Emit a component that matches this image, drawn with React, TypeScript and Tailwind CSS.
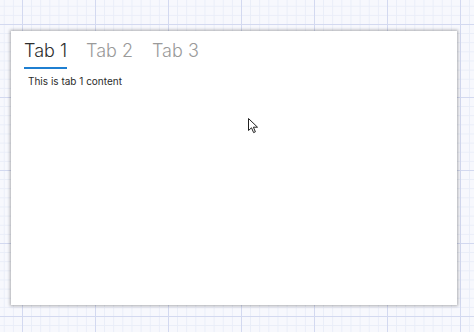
import React, { useState } from 'react'

const tabs = ['Tab 1', 'Tab 2', 'Tab 3']

export default function App() {
  const [active, setActive] = useState(0)

  return (
    <div
      className="relative h-[332px] w-full overflow-hidden bg-[#f7f8fd] bg-[image:linear-gradient(to_right,#d3d9f0_1px,transparent_1px),linear-gradient(to_bottom,#d3d9f0_1px,transparent_1px),linear-gradient(to_right,#e9edf8_1px,transparent_1px),linear-gradient(to_bottom,#e9edf8_1px,transparent_1px)] bg-[size:73px_73px,73px_73px,9.125px_9.125px,9.125px_9.125px] bg-[position:22px_24px,22px_24px,22px_24px,22px_24px] pl-[11px] pt-[31px] font-[Inter,sans-serif]"
    >
      {/* card */}
      <div className="h-[274px] w-[446px] bg-white shadow-[0_0_3px_1px_rgba(0,0,0,0.3)]">
        <div className="flex gap-[19px] pl-[13px] pt-[8px]">
          {tabs.map((t, i) => (
            <button
              key={t}
              onClick={() => setActive(i)}
              className={`border-b-2 pb-1 text-[18px] font-light leading-6 ${
                i === active ? 'border-[#1f7fd1] text-[#2e2e2e]' : 'border-transparent text-[#9a9a9a]'
              }`}
            >
              {t}
            </button>
          ))}
        </div>
        <p className="mt-[4px] pl-[17px] text-[10px] leading-4 text-[#2b2b2b]">
          This is tab {active + 1} content
        </p>
      </div>

      {/* mouse pointer */}
      <svg className="absolute left-[248px] top-[118px]" width="11" height="16" viewBox="0 0 11 16">
        <path d="M0.5 0.5 L0.5 12.5 L3.5 9.8 L5.6 14.6 L7.4 13.8 L5.4 9.2 L9.5 9.2 Z" fill="#fff" stroke="#222" strokeWidth="1" strokeLinejoin="round" />
      </svg>
    </div>
  )
}
